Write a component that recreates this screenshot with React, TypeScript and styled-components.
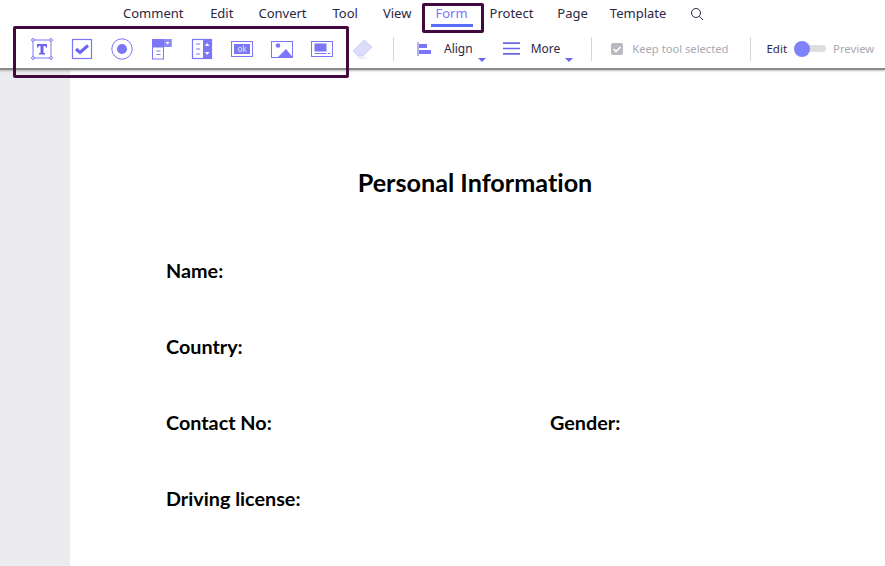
import React from "react";
import styled, { createGlobalStyle } from "styled-components";

const accent = "#7b76f5";
const accentDark = "#6a64f0";

const GlobalStyle = createGlobalStyle`
  html, body {
    margin: 0;
    padding: 0;
    background: #fff;
  }
  body {
    font-family: "Noto Sans", "Open Sans", sans-serif;
  }
`;

const Screen = styled.div`
  position: relative;
  width: 885px;
  height: 566px;
  overflow: hidden;
`;

const Header = styled.header`
  position: relative;
  height: 68px;
  background: #fff;
  border-bottom: 2px solid #8a8a8a;
  box-shadow: 0 1px 2px rgba(0, 0, 0, 0.25);
`;

const Nav = styled.nav`
  display: flex;
  align-items: center;
  height: 27px;
  padding-left: 123px;
  gap: 22px;
`;

const NavItem = styled.span<{ $active?: boolean; $after: number }>`
  position: relative;
  font-size: 13px;
  line-height: 27px;
  margin-right: ${(p) => p.$after}px;
  color: ${(p) => (p.$active ? accent : "#2b2645")};
  ${(p) =>
    p.$active &&
    `&::after {
      content: "";
      position: absolute;
      left: -4px;
      right: -5px;
      bottom: 0;
      height: 3px;
      background: #5b6cf5;
    }`}
`;

const Toolbar = styled.div`
  display: flex;
  align-items: center;
  box-sizing: border-box;
  height: 41px;
  padding: 2px 0 0 31px;
`;

const ToolGroup = styled.div`
  display: flex;
  align-items: center;
  gap: 18px;
`;

const ToolIcon = styled.svg<{ $size?: number }>`
  display: block;
  width: ${(p) => p.$size ?? 22}px;
  height: ${(p) => p.$size ?? 22}px;
  flex: none;
`;

const Divider = styled.div<{ $left: number; $right: number }>`
  width: 1px;
  height: 24px;
  background: #d5d5dc;
  margin: 0 ${(p) => p.$right}px 0 ${(p) => p.$left}px;
  flex: none;
`;

const ActionButton = styled.div`
  position: relative;
  display: flex;
  align-items: center;
  gap: 11px;
  font-size: 12px;
  color: #2b2645;
  margin-right: 30px;
  &::after {
    content: "";
    position: absolute;
    right: -13px;
    bottom: -5px;
    border-left: 4px solid transparent;
    border-right: 4px solid transparent;
    border-top: 4px solid ${accentDark};
  }
`;

const KeepOption = styled.div`
  display: flex;
  align-items: center;
  gap: 9px;
  font-size: 11.2px;
  color: #a9a9b2;
`;

const ModeSwitch = styled.div`
  display: flex;
  align-items: center;
  gap: 7px;
  font-size: 11.5px;
  color: #2b2645;
`;

const PreviewLabel = styled.span`
  font-size: 11.3px;
  color: #a9a9b2;
`;

const SwitchTrack = styled.div`
  position: relative;
  width: 32px;
  height: 7px;
  border-radius: 4px;
  background: #dedee2;
`;

const SwitchThumb = styled.div`
  position: absolute;
  left: 0;
  top: -4.5px;
  width: 16px;
  height: 16px;
  border-radius: 50%;
  background: #7f82fa;
`;

const Workspace = styled.main`
  display: grid;
  grid-template-columns: 70px 1fr;
  height: 496px;
`;

const Sidebar = styled.aside`
  background: #ebebf0;
`;

const Sheet = styled.section`
  background: #fff;
  padding: 96px 0 0 96px;
  font-family: Lato, Carlito, sans-serif;
  font-variant-ligatures: none;
  color: #000;
`;

const Title = styled.h1`
  margin: 0 0 58px;
  width: 618px;
  text-align: center;
  font-size: 25.2px;
  line-height: 32px;
  font-weight: 700;
`;

const FieldRow = styled.div`
  display: flex;
  height: 76px;
  font-size: 19.8px;
  line-height: 28px;
  font-weight: 700;
`;

const FieldLabel = styled.div`
  width: 384px;
`;

const Highlight = styled.div`
  position: absolute;
  border: 3px solid #42093f;
  border-radius: 2px;
  box-sizing: border-box;
  pointer-events: none;
`;

const FormHighlight = styled(Highlight)`
  left: 422px;
  top: 3px;
  width: 62px;
  height: 30px;
`;

const ToolsHighlight = styled(Highlight)`
  left: 13px;
  top: 26px;
  width: 336px;
  height: 52px;
`;

const navItems = [
  { name: "Comment", after: 4.7 },
  { name: "Edit", after: 3 },
  { name: "Convert", after: 4 },
  { name: "Tool", after: 3 },
  { name: "View", after: 2 },
  { name: "Form", after: 0 },
  { name: "Protect", after: 2 },
  { name: "Page", after: 0 },
  { name: "Template", after: 2 },
];

const tools = [
  <>
    <rect x="2" y="2" width="18" height="18" fill="none" stroke={accent} strokeWidth="1" />
    <g fill="#fff" stroke={accent} strokeWidth="1">
      <circle cx="2" cy="2" r="1.4" />
      <circle cx="20" cy="2" r="1.4" />
      <circle cx="2" cy="20" r="1.4" />
      <circle cx="20" cy="20" r="1.4" />
    </g>
    <path d="M6 6h10v3.5h-1.5V8h-2v7H14v1.5H8V15h1.5V8h-2v1.5H6z" fill={accentDark} />
  </>,
  <>
    <rect x="1.5" y="1.5" width="19" height="19" fill="none" stroke={accent} strokeWidth="1.2" />
    <path d="M5 11l4 3.5 8-7" fill="none" stroke={accentDark} strokeWidth="3" />
  </>,
  <>
    <circle cx="11" cy="11" r="10.2" fill="none" stroke={accent} strokeWidth="1" />
    <circle cx="11" cy="11" r="5" fill={accent} />
  </>,
  <>
    <rect x="1.5" y="9" width="11" height="12" fill="none" stroke={accent} strokeWidth="1" />
    <rect x="1" y="1" width="19.5" height="8" fill={accent} />
    <rect x="13" y="1" width="7.5" height="8" fill="#8f8cf7" />
    <path d="M14.5 4h4L16.5 6.5z" fill="#fff" />
    <path d="M5.5 13h4M5.5 16.5h4" stroke={accent} strokeWidth="1" />
  </>,
  <>
    <rect x="1.5" y="1.5" width="19" height="19" fill="none" stroke={accent} strokeWidth="1.2" />
    <rect x="12" y="1.5" width="8.5" height="19" fill={accent} />
    <path d="M5 6h4M5 11h4M5 16h4" stroke={accent} strokeWidth="1" />
    <path d="M16.2 5l2.3 3h-4.6zM16.2 17l-2.3-3h4.6z" fill="#fff" />
  </>,
  <>
    <rect x="0.5" y="3.5" width="21" height="15" fill="none" stroke={accent} strokeWidth="1" />
    <rect x="3" y="6" width="16" height="10" fill={accent} />
    <text x="11" y="13.5" textAnchor="middle" fontSize="8" fill="#e4e4ff">
      ok
    </text>
  </>,
  <>
    <rect x="0.5" y="3.5" width="21" height="16" fill="none" stroke={accent} strokeWidth="1" />
    <circle cx="7" cy="7.5" r="2.3" fill={accent} />
    <path d="M7 19l8-8 6.5 8z" fill={accent} />
  </>,
  <>
    <rect x="0.5" y="3.5" width="21" height="15" fill="none" stroke={accent} strokeWidth="1" />
    <rect x="3.5" y="5.5" width="12" height="8" fill={accent} />
    <path d="M3.5 15.5h12M17 15.5h2" stroke={accent} strokeWidth="1" />
  </>,
];

const rows = [["Name:"], ["Country:"], ["Contact No:", "Gender:"], ["Driving license:"]];

export default function App() {
  return (
    <Screen>
      <GlobalStyle />
      <Header>
        <Nav>
          {navItems.map(({ name, after }) => (
            <NavItem key={name} $after={after} $active={name === "Form"}>
              {name}
            </NavItem>
          ))}
          <ToolIcon $size={14} viewBox="0 0 14 14">
            <circle cx="6" cy="6" r="4.5" fill="none" stroke="#2b2645" strokeWidth="1" />
            <path d="M9.3 9.3L13 13" stroke="#2b2645" strokeWidth="1" />
          </ToolIcon>
        </Nav>
        <Toolbar>
          <ToolGroup>
            {tools.map((tool, index) => (
              <ToolIcon key={index} viewBox="0 0 22 22">
                {tool}
              </ToolIcon>
            ))}
            <ToolIcon viewBox="0 0 22 22">
              <path d="M2 13L13 2l8 7-9 9H7z" fill="#dcdcfb" stroke="#cfcff7" strokeWidth="1" />
              <path d="M6 20h10" stroke="#dcdcfb" strokeWidth="1" />
            </ToolIcon>
          </ToolGroup>
          <Divider $left={20} $right={23} />
          <ActionButton>
            <ToolIcon $size={16} viewBox="0 0 16 16">
              <path d="M1 1v14" stroke={accentDark} strokeWidth="1" />
              <path d="M2 3h8v4H2zM2 9h12v4H2z" fill={accent} />
            </ToolIcon>
            Align
          </ActionButton>
          <ActionButton>
            <ToolIcon $size={17} viewBox="0 0 16 16">
              <path d="M0 3h16M0 8h16M0 13h16" stroke={accentDark} strokeWidth="1.6" />
            </ToolIcon>
            More
          </ActionButton>
          <Divider $left={1} $right={19} />
          <KeepOption>
            <ToolIcon $size={12} viewBox="0 0 12 12">
              <rect width="12" height="12" rx="2" fill="#b9b9c2" />
              <path d="M2.5 6l2.5 2.5 4.5-4.5" fill="none" stroke="#fff" strokeWidth="1.6" />
            </ToolIcon>
            Keep tool selected
          </KeepOption>
          <Divider $left={22} $right={15} />
          <ModeSwitch>
            Edit
            <SwitchTrack>
              <SwitchThumb />
            </SwitchTrack>
            <PreviewLabel>Preview</PreviewLabel>
          </ModeSwitch>
        </Toolbar>
      </Header>
      <Workspace>
        <Sidebar />
        <Sheet>
          <Title>Personal Information</Title>
          {rows.map((cells) => (
            <FieldRow key={cells[0]}>
              {cells.map((label) => (
                <FieldLabel key={label}>{label}</FieldLabel>
              ))}
            </FieldRow>
          ))}
        </Sheet>
      </Workspace>
      <FormHighlight />
      <ToolsHighlight />
    </Screen>
  );
}
